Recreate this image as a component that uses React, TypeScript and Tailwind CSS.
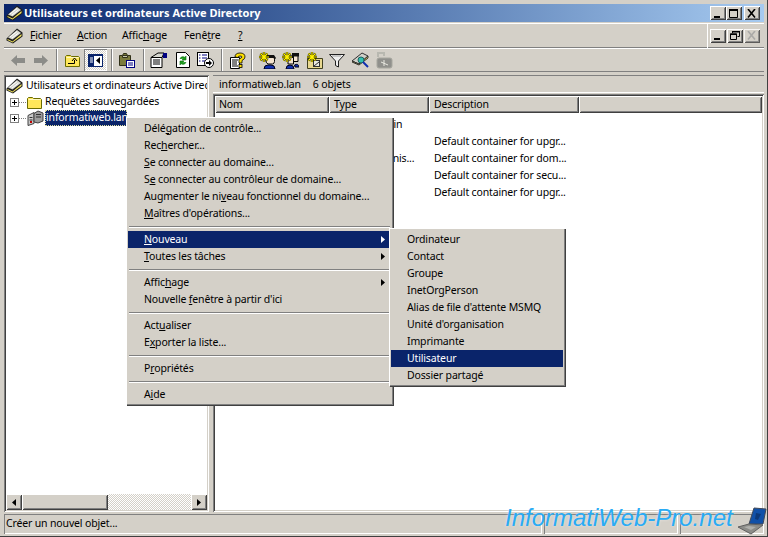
import React from "react";

const raised =
  "shadow-[inset_1px_1px_0_#ffffff,inset_-1px_-1px_0_#404040,inset_2px_2px_0_#d4d0c8,inset_-2px_-2px_0_#808080]";
const sunken = "shadow-[inset_1px_1px_0_#808080,inset_-1px_-1px_0_#ffffff,inset_2px_2px_0_#404040,inset_-2px_-2px_0_#d4d0c8]";
const etched = "shadow-[inset_0_1px_0_#ffffff,inset_0_-1px_0_#808080]";
const dither = "bg-[repeating-conic-gradient(#d4d0c8_0_25%,#ffffff_0_50%)] bg-[length:2px_2px]";

const SnapIn = () => (
  <svg width="17" height="16" viewBox="0 0 17 16" className="shrink-0">
    <path d="M.5 10.500 11 .5l5.500 4v4L7 15.500l-6.500-3z" fill="#202020" />
    <path d="M2 9.500 11 2l4 3-8.500 6.500z" fill="#d8d8d0" />
    <path d="M4 9l7-5.500M6 10l6.500-5" stroke="#fff" />
    <path d="M1.500 11l5 2.500 9-7.500v2l-9 6.500-5-2.500z" fill="#f2e35c" />
  </svg>
);

const Folder = ({ plain }: { plain?: boolean }) => (
  <svg width="15" height="13" viewBox="0 0 15 13" className="shrink-0">
    <path d="M.5 12.500v-10l1-1h4l1 1h7l1 1v9z" fill="#ffe75a" stroke="#6c6c00" />
    <path d="M1.500 3.500h12" stroke="#fff8c0" />
    {plain ? null : <path d="M3 9.500h6.500V6M7 7l2.500-3L12 7" stroke="#000" fill="none" />}
  </svg>
);

const Server = () => (
  <svg width="17" height="16" viewBox="0 0 17 16" className="shrink-0">
    <path d="M1 5.500 7 2.500v11l-6 2z" fill="#c8c8c8" stroke="#404040" />
    <path d="M7 3.500 11 1l5 2v8l-5 2-4-1z" fill="#9c9c9c" stroke="#404040" />
    <path d="M2.500 7.500h3M2.500 10h3M9 4.500h5M9 7h5" stroke="#303030" />
    <rect x="3" y="11" width="2" height="2" fill="#c00000" />
  </svg>
);

const ArrowBack = ({ flip }: { flip?: boolean }) => (
  <svg width="14" height="11" viewBox="0 0 14 11" className={flip ? "-scale-x-100" : ""}>
    <path d="M6 0v3h8v5H6v3L0 5.500z" fill="#8c8c88" />
  </svg>
);

const Clipboard = () => (
  <svg width="16" height="16" viewBox="0 0 16 16">
    <path d="M.5 3.500h3l1-2h3l1 2h3v10H.5z" fill="#7a7a3c" stroke="#303018" />
    <path d="M3.500 3.500h5v2h-5z" fill="#c8c8b0" stroke="#303018" />
    <rect x="7.500" y="8.500" width="8" height="7" fill="#fff" stroke="#000080" />
    <path d="M9 11h5M9 13h5" stroke="#000080" />
  </svg>
);

const PaneToggle = () => (
  <svg width="15" height="13" viewBox="0 0 15 13">
    <rect x=".5" y=".5" width="14" height="12" fill="#fff" stroke="#0a246a" />
    <rect x="0" y="0" width="15" height="2" fill="#0a246a" />
    <rect x="1" y="2" width="5" height="10" fill="#0a246a" />
    <path d="M2 4h3M2 6h3M2 8h3" stroke="#fff" />
    <path d="M12 3v7L8 6.500z" fill="#000" />
  </svg>
);

const Props = () => (
  <svg width="17" height="16" viewBox="0 0 17 16">
    <path d="M1 5.500h11v10H1z" fill="#fff" stroke="#000" />
    <path d="M3 8h7M3 10h7M3 12h7" stroke="#000" />
    <path d="M1 5.500 8 1h6l-2 4.500z" fill="#d8d8d0" stroke="#000" />
    <rect x="13" y="1" width="4" height="5" fill="#000080" />
  </svg>
);

const Refresh = () => (
  <svg width="14" height="16" viewBox="0 0 14 16">
    <path d="M.5.500h9l4 4v11H.5z" fill="#fff" stroke="#000" />
    <path d="M4 7a3 3 0 0 1 5-1.500L10 4v4H6l1.500-1.300M10 10a3 3 0 0 1-5 1.500L4 13V9h4l-1.500 1.300" fill="#1c9c1c" stroke="#0c700c" strokeWidth=".6" />
  </svg>
);

const ExportList = () => (
  <svg width="17" height="16" viewBox="0 0 17 16">
    <rect x=".5" y=".5" width="11" height="13" fill="#fff" stroke="#000" />
    <path d="M2 3h1.500M5 3h5M2 6h1.500M5 6h5M2 9h1.500M5 9h3" stroke="#000080" />
    <circle cx="12" cy="11" r="4.500" fill="#fff" stroke="#000" />
    <path d="M9 10h3V8l3 3-3 3v-2H9z" fill="#000" />
  </svg>
);

const Help = () => (
  <svg width="17" height="17" viewBox="0 0 17 17">
    <path d="M1.500 5.500h9v11h-9z" fill="#fff" stroke="#000" />
    <path d="M3 8h6M3 10h5M3 12h5M3 14h6" stroke="#000" />
    <path d="M6 5q0-4 5-4t5 4q0 2-3 3.500V11H10V7q3-1 3-2t-2-1-2 1.500z" fill="#ffe000" stroke="#000" strokeWidth=".8" />
    <rect x="10" y="12.500" width="3" height="3" fill="#ffe000" stroke="#000" strokeWidth=".8" />
  </svg>
);

const rays = "M5 0v10M0 5h10M1.500 1.500l7 7M8.500 1.500l-7 7";
const Star = () => (
  <g>
    <path d={rays} stroke="#202000" strokeWidth="2.400" />
    <path d={rays} stroke="#fff200" strokeWidth="1.200" />
  </g>
);

const NewUser = () => (
  <svg width="17" height="17" viewBox="0 0 17 17">
    <path d="M7 4.500h7q1.500 1 1.500 3v2q0 2-2 2.500H9q-2-1-2-3z" fill="#f4e4d0" stroke="#000" />
    <path d="M6 3h9l2 3-2 2.500V6H8l-1 2z" fill="#101010" />
    <path d="M5 17q0-4 4-4h3q4 0 4 4z" fill="#1030b0" stroke="#000018" />
    <Star />
  </svg>
);

const NewGroup = () => (
  <svg width="17" height="17" viewBox="0 0 17 17">
    <path d="M11.500 2.500h4.500v7h-4.500z" fill="#f4e4d0" stroke="#000" />
    <path d="M10 1h7v3.500h-7z" fill="#101010" />
    <path d="M6 4.500h5.500v7.500H6z" fill="#f4e4d0" stroke="#000" />
    <path d="M5 3.500h7V6H5z" fill="#101010" />
    <path d="M4 17q0-4 4-4 4 0 4 4zM12.500 13q4-2 4.500 2h-4z" fill="#1030b0" stroke="#000018" />
    <Star />
  </svg>
);

const NewOu = () => (
  <svg width="16" height="17" viewBox="0 0 16 17">
    <path d="M.5 16.500v-10h15v10z" fill="#e8d890" stroke="#404020" />
    <rect x="6.500" y="8.500" width="6" height="6" fill="#e8e8e0" stroke="#303030" />
    <path d="M7 14l5-4" stroke="#303030" />
    <Star />
  </svg>
);

const Filter = () => (
  <svg width="16" height="15" viewBox="0 0 16 15">
    <path d="M.5 1.500h15L9.500 8v6l-3-1.500V8z" fill="#f0f0f0" stroke="#202020" />
    <path d="M3 3h9" stroke="#a0a0a0" />
  </svg>
);

const Find = () => (
  <svg width="17" height="16" viewBox="0 0 17 16">
    <path d="M0 9 10 1l6 3-9 8z" fill="#d0d0c8" stroke="#303030" />
    <path d="M0 9l7 3 9-8v2l-9 7-7-3z" fill="#e8d860" stroke="#303030" />
    <circle cx="9" cy="8" r="3" fill="#30c0b0" stroke="#206060" />
    <path d="M11 10l5 5" stroke="#1030b0" strokeWidth="2" />
  </svg>
);

const Lock = () => (
  <svg width="17" height="17" viewBox="0 0 17 17">
    <path d="M2 5V1h6v3" fill="none" stroke="#b8b8b0" strokeWidth="2" />
    <rect x="1" y="6" width="15" height="10" rx="2" fill="#90908c" stroke="#a8a8a0" />
    <path d="M8 8v6M5 10l7 3" stroke="#e8e8e0" />
  </svg>
);

const Expander = () => (
  <span className="flex items-center w-[17px] shrink-0">
    <span className="flex items-center justify-center w-[9px] h-[9px] border border-[#808080] bg-white relative">
      <span className="absolute w-[5px] h-px bg-black" />
      <span className="absolute h-[5px] w-px bg-black" />
    </span>
    <span className="w-[7px] border-t border-dotted border-[#808080]" />
  </span>
);

const CaptionButton = ({ children, dim }: { children: React.ReactNode; dim?: boolean }) => (
  <span className={`flex items-center justify-center w-[16px] h-[14px] bg-[#d4d0c8] ${raised} ${dim ? "opacity-80" : ""}`}>
    {children}
  </span>
);

const MinGlyph = ({ color = "#000" }: { color?: string }) => (
  <svg width="10" height="9" viewBox="0 0 10 9"><rect x="1" y="7" width="6" height="2" fill={color} /></svg>
);
const MaxGlyph = () => (
  <svg width="10" height="9" viewBox="0 0 10 9"><path d="M.5 1.500h8v7h-8z" fill="none" stroke="#000" /><rect x="0" y="0" width="9" height="2" /></svg>
);
const CloseGlyph = ({ color = "#000" }: { color?: string }) => (
  <svg width="10" height="9" viewBox="0 0 10 9"><path d="M1 0l7 8.500M8 0 1 8.500" stroke={color} strokeWidth="1.600" /></svg>
);
const RestoreGlyph = () => (
  <svg width="10" height="9" viewBox="0 0 10 9">
    <path d="M2.500 2V.500h7v5H7.500" fill="none" stroke="#000" />
    <path d="M.5 3h6v5.500h-6z" fill="#d4d0c8" stroke="#000" />
    <path d="M2 0h8v1.500H2zM0 2.500h7V4H0z" />
  </svg>
);

type MenuRow = { label: React.ReactNode; sub?: boolean; active?: boolean } | "sep";

const contextMenu: MenuRow[] = [
  { label: <>Délé<u>g</u>ation de contrôle...</> },
  { label: <>Rec<u>h</u>ercher...</> },
  { label: <><u>S</u>e connecter au domaine...</> },
  { label: <>S<u>e</u> connecter au contrôleur de domaine...</> },
  { label: <>Augmenter le ni<u>v</u>eau fonctionnel du domaine...</> },
  { label: <><u>M</u>aîtres d'opérations...</> },
  "sep",
  { label: <><u>N</u>ouveau</>, sub: true, active: true },
  { label: <><u>T</u>outes les tâches</>, sub: true },
  "sep",
  { label: <>Affic<u>h</u>age</>, sub: true },
  { label: <>Nouvelle <u>f</u>enêtre à partir d'ici</> },
  "sep",
  { label: <>Act<u>u</u>aliser</> },
  { label: <>E<u>x</u>porter la liste...</> },
  "sep",
  { label: <>P<u>r</u>opriétés</> },
  "sep",
  { label: <>A<u>i</u>de</> },
];

const subMenu: MenuRow[] = [
  { label: "Ordinateur" },
  { label: "Contact" },
  { label: "Groupe" },
  { label: "InetOrgPerson" },
  { label: "Alias de file d'attente MSMQ" },
  { label: "Unité d'organisation" },
  { label: "Imprimante" },
  { label: "Utilisateur", active: true },
  { label: "Dossier partagé" },
];

const menuShadow =
  "shadow-[inset_1px_1px_0_#ffffff,inset_-1px_-1px_0_#808080,1px_1px_0_#404040]";

const Menu = ({ rows, className }: { rows: MenuRow[]; className: string }) => (
  <div className={`absolute flex flex-col bg-[#d4d0c8] ${menuShadow} ${className}`}>
    {rows.map((row, i) =>
      row === "sep" ? (
        <div key={i} className="h-[9px] flex flex-col justify-center px-px">
          <div className="h-px bg-[#808080]" />
          <div className="h-px bg-white" />
        </div>
      ) : (
        <div
          key={i}
          className={`h-[17px] flex items-center justify-between pl-[16px] pr-[6px] ${row.active ? "bg-[#0a246a] text-white" : "text-black"}`}
        >
          <span className="whitespace-nowrap">{row.label}</span>
          {row.sub ? (
            <svg width="4" height="7" viewBox="0 0 4 7"><path d="M0 0l4 3.500L0 7z" fill={row.active ? "#fff" : "#000"} /></svg>
          ) : null}
        </div>
      ),
    )}
  </div>
);

const rows = [
  { type: "builtinDomain", desc: "" },
  { type: "", desc: "Default container for upgr..." },
  { type: "Unité d'organis...", desc: "Default container for dom..." },
  { type: "", desc: "Default container for secu..." },
  { type: "", desc: "Default container for upgr..." },
];

const Sep = ({ className }: { className: string }) => (
  <span className={`w-[2px] h-[22px] border-l border-[#808080] border-r-0 bg-white shrink-0 ${className}`} />
);

const ColHead = ({ label, className }: { label: string; className: string }) => (
  <div className={`h-[17px] flex items-center bg-[#d4d0c8] shrink-0 ${raised} ${className}`}>{label}</div>
);

export default function App() {
  return (
    <div className="relative w-[768px] h-[537px] overflow-hidden bg-[#d4d0c8] text-black text-[10.5px] tracking-[-0.15px] [font-family:'Noto_Sans',sans-serif] flex flex-col pt-[4px] px-[4px] pb-[3px] shadow-[inset_-1px_-1px_0_#404040]">
      {/* title bar */}
      <div className="h-[18px] shrink-0 flex items-center pl-[2px] pr-[4px] bg-gradient-to-r from-[#0a246a] to-[#a6caf0]">
        <SnapIn />
        <span className="ml-[1px] text-white font-bold text-[11px] tracking-normal">Utilisateurs et ordinateurs Active Directory</span>
        <div className="ml-auto flex items-center">
          <CaptionButton><MinGlyph /></CaptionButton>
          <CaptionButton><MaxGlyph /></CaptionButton>
          <span className="w-[2px]" />
          <CaptionButton><CloseGlyph /></CaptionButton>
        </div>
      </div>

      {/* menu bar */}
      <div className={`mt-[1px] h-[25px] shrink-0 flex items-center pl-[2px] ${etched}`}>
        <SnapIn />
        <span className="ml-[7px] w-[47px] pt-[1px]"><u>F</u>ichier</span>
        <span className="w-[45px] pt-[1px]"><u>A</u>ction</span>
        <span className="w-[62px] pt-[1px]">Affic<u>h</u>age</span>
        <span className="w-[54px] pt-[1px]">Fenê<u>t</u>re</span>
        <span className="pt-[1px]"><u>?</u></span>
        <div className="ml-auto h-full flex items-center gap-[1px] pl-[2px] pr-[4px] border-l border-white">
          <CaptionButton><MinGlyph /></CaptionButton>
          <CaptionButton><RestoreGlyph /></CaptionButton>
          <CaptionButton dim><CloseGlyph color="#a0a0a0" /></CaptionButton>
        </div>
      </div>

      {/* toolbar */}
      <div className={`h-[24px] shrink-0 flex items-center ${etched}`}>
        <span className="ml-[7px]"><ArrowBack /></span>
        <span className="ml-[9px]"><ArrowBack flip /></span>
        <Sep className="ml-[8px]" />
        <span className="ml-[7px]"><Folder /></span>
        <span className={`ml-[4px] w-[23px] h-[22px] flex items-center justify-center ${dither} shadow-[inset_1px_1px_0_#808080,inset_-1px_-1px_0_#ffffff]`}><PaneToggle /></span>
        <Sep className="ml-[4px]" />
        <span className="ml-[6px]"><Clipboard /></span>
        <Sep className="ml-[8px]" />
        <span className="ml-[5px]"><Props /></span>
        <span className="ml-[9px]"><Refresh /></span>
        <span className="ml-[7px]"><ExportList /></span>
        <Sep className="ml-[7px]" />
        <span className="ml-[6px]"><Help /></span>
        <Sep className="ml-[5px]" />
        <span className="ml-[6px]"><NewUser /></span>
        <span className="ml-[6px]"><NewGroup /></span>
        <span className="ml-[8px]"><NewOu /></span>
        <span className="ml-[6px]"><Filter /></span>
        <span className="ml-[7px]"><Find /></span>
        <span className="ml-[7px]"><Lock /></span>
      </div>

      {/* panes */}
      <div className="flex-1 min-h-0 flex pt-[3px] pb-[1px]">
        <div className={`w-[205px] shrink-0 flex flex-col bg-white p-[2px] ${sunken}`}>
          <div className="flex-1 min-h-0 overflow-hidden pt-[1px]">
            <div className="h-[16px] flex items-center whitespace-nowrap">
              <SnapIn />
              <span className="ml-[3px]">Utilisateurs et ordinateurs Active Direc</span>
            </div>
            <div className="h-[16px] flex items-center pl-[4px] whitespace-nowrap">
              <Expander />
              <Folder plain />
              <span className="ml-[3px]">Requêtes sauvegardées</span>
            </div>
            <div className="h-[16px] flex items-center pl-[4px] whitespace-nowrap">
              <Expander />
              <Server />
              <span className="ml-[1px] w-[82px] px-[1px] bg-[#0a246a] text-white outline-1 outline-dotted outline-[#e0e0a0] -outline-offset-1">informatiweb.lan</span>
            </div>
          </div>
          <div className={`h-[16px] shrink-0 flex ${dither}`}>
            <span className={`w-[16px] flex items-center justify-center bg-[#d4d0c8] ${raised}`}>
              <svg width="4" height="7" viewBox="0 0 4 7"><path d="M4 0 0 3.500 4 7z" /></svg>
            </span>
            <span className={`w-[86px] bg-[#d4d0c8] ${raised}`} />
            <span className={`ml-auto w-[16px] flex items-center justify-center bg-[#d4d0c8] ${raised}`}>
              <svg width="4" height="7" viewBox="0 0 4 7"><path d="M0 0l4 3.500L0 7z" /></svg>
            </span>
          </div>
        </div>

        <div className="ml-[4px] flex-1 min-w-0 flex flex-col">
          <div className="h-[18px] shrink-0 flex items-center pl-[6px] pt-[2px] shadow-[inset_0_1px_0_#808080,inset_0_-1px_0_#ffffff]">
            <span>informatiweb.lan</span>
            <span className="ml-[12px]">6 objets</span>
          </div>
          <div className={`mt-[1px] flex-1 min-h-0 bg-white p-[2px] ${sunken}`}>
            <div className="flex bg-[#d4d0c8]">
              <ColHead label="Nom" className="w-[114px] pl-[4px]" />
              <ColHead label="Type" className="w-[100px] pl-[5px]" />
              <ColHead label="Description" className="w-[150px] pl-[5px]" />
              <div className={`flex-1 h-[17px] ${raised}`} />
            </div>
            <div className="pt-[3px]">
              {rows.map((r, i) => (
                <div key={i} className="h-[17px] flex items-center whitespace-nowrap">
                  <span className="w-[114px] shrink-0" />
                  <span className="w-[100px] shrink-0 pl-[5px]">{r.type}</span>
                  <span className="pl-[5px]">{r.desc}</span>
                </div>
              ))}
            </div>
          </div>
        </div>
      </div>

      {/* status bar */}
      <div className="h-[20px] shrink-0 flex mt-[1px]">
        <div className="w-[538px] flex items-center pl-[2px] shadow-[inset_1px_1px_0_#808080,inset_-1px_-1px_0_#ffffff]">Créer un nouvel objet...</div>
        <div className="ml-[2px] w-[134px] shadow-[inset_1px_1px_0_#808080,inset_-1px_-1px_0_#ffffff]" />
        <div className="ml-[2px] flex-1 shadow-[inset_1px_1px_0_#808080,inset_-1px_-1px_0_#ffffff]" />
      </div>

      <Menu rows={contextMenu} className="left-[126px] top-[117px] w-[267px] h-[288px] pt-[3px] px-[2px]" />
      <Menu rows={subMenu} className="left-[389px] top-[228px] w-[176px] h-[158px] pt-[3px] px-[2px]" />

      {/* watermark */}
      <span className="absolute left-[505px] top-[503px] text-[24px] leading-[30px] tracking-normal italic whitespace-nowrap text-[#29abf5] [font-family:'Liberation_Sans',sans-serif] [text-shadow:0_0_3px_#ffffff80]">InformatiWeb-Pro.net</span>
      <svg width="30" height="30" viewBox="0 0 30 30" className="absolute left-[737px] top-[506px]">
        <path d="M12 18 17 2l12 1-3 15z" fill="#1050a8" stroke="#404858" />
        <path d="M19 7l5 1-3 6-3-1z" fill="#0c3878" />
        <path d="M1 21l11-3 14 1-12 9z" fill="#8c8c88" stroke="#606060" />
        <path d="M7 21l5-1 7 1-5 3z" fill="#b0b0ac" />
      </svg>
    </div>
  );
}
